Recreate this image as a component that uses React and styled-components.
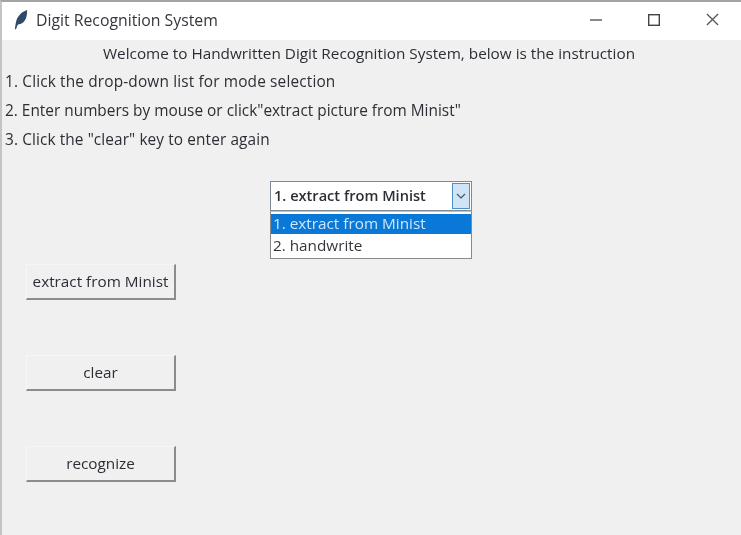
import React from 'react';
import styled, {createGlobalStyle} from 'styled-components';

const GlobalStyle = createGlobalStyle`
html, body {
  margin: 0;
  padding: 0;
  background: #f0f0f0;
}
* {
  box-sizing: border-box;
}
`

const Window = styled.div`
width: 741px;
height: 535px;
overflow: hidden;
display: flex;
flex-direction: column;
background: #f0f0f0;
border-top: solid 2px #a3a3a3;
border-left: solid 2px #c4c4c4;
font-family: "Open Sans", "Liberation Sans", sans-serif;
color: #2b2f35;
filter: blur(0.7px);
`

const TitleBar = styled.div`
height: 38px;
flex-shrink: 0;
display: flex;
flex-direction: row;
align-items: center;
background: #ffffff;
padding-left: 12px;
padding-bottom: 3px;
`

const Title = styled.div`
margin-left: 8px;
font-size: 15.8px;
color: #33373d;
flex: 1;
`

const WinButton = styled.div`
width: 58px;
display: flex;
align-items: center;
justify-content: center;
`

const Content = styled.div`
flex: 1;
display: flex;
flex-direction: column;
`

const Welcome = styled.div`
height: 27px;
line-height: 26px;
font-size: 15.3px;
padding-left: 101px;
white-space: nowrap;
`

const Line = styled.div`
height: 29px;
line-height: 29px;
font-size: 15.4px;
letter-spacing: ${({spacing}) => spacing || 0}px;
padding-left: 3px;
white-space: nowrap;
`

const ComboRow = styled.div`
margin-top: 27px;
padding-left: 268px;
`

const ComboWrap = styled.div`
position: relative;
width: 202px;
`

const Combo = styled.div`
height: 30px;
display: flex;
flex-direction: row;
align-items: center;
justify-content: space-between;
background: #ffffff;
border: solid 1px #7e8a96;
padding: 0 1px 0 3px;
font-size: 14.6px;
font-weight: 600;
white-space: nowrap;

span {
  margin-bottom: 2px;
}
`

const Arrow = styled.div`
width: 18px;
height: 26px;
display: flex;
align-items: center;
justify-content: center;
background: #cfe4f7;
border: solid 1px #4f8fc7;
`

const Menu = styled.div`
position: absolute;
top: 30px;
left: 0;
width: 202px;
height: 48px;
padding-top: 2px;
display: flex;
flex-direction: column;
gap: 2px;
background: #ffffff;
border: solid 1px #8a8a8a;
border-top: solid 1px #9ccaf0;
font-size: 15.3px;
white-space: nowrap;
`

const Option = styled.div`
height: 20px;
line-height: 18px;
padding-left: 2px;
background: ${({selected}) => selected ? '#0a78d7' : 'transparent'};
color: ${({selected}) => selected ? '#cfe6fa' : '#33373d'};
`

const Buttons = styled.div`
margin-top: 53px;
padding-left: 24px;
display: flex;
flex-direction: column;
gap: 55px;
`

const Button = styled.button`
width: 150px;
height: 36px;
padding: 0 0 2px;
background: #f0f0f0;
border: none;
border-top: solid 1px #f6f6f6;
border-left: solid 1px #f8f8f8;
border-right: solid 2px #8c8c8c;
border-bottom: solid 2px #8c8c8c;
font-family: inherit;
font-size: 15.3px;
color: #2b2f35;
white-space: nowrap;
`

const Feather = () => (
  <svg width="14" height="20" viewBox="0 0 14 20">
    <path d="M1 19 C1 17 1.5 15 2 12 C3 7 7 2 13 0 C13.5 5 12 12 6.5 14 L4 14.5 C3 16 2.5 18 2 19.5 Z" fill="#2f4a68" />
  </svg>
)

const App = () => {
  return (
    <Window>
      <GlobalStyle />
      <TitleBar>
        <Feather />
        <Title>Digit Recognition System</Title>
        <WinButton>
          <svg width="12" height="12" viewBox="0 0 12 12">
            <path d="M0 6 H12" stroke="#555" strokeWidth="1.4" />
          </svg>
        </WinButton>
        <WinButton>
          <svg width="12" height="12" viewBox="0 0 12 12">
            <rect x="0.7" y="0.7" width="10.6" height="10.6" fill="none" stroke="#444" strokeWidth="1.4" />
          </svg>
        </WinButton>
        <WinButton>
          <svg width="13" height="13" viewBox="0 0 14 14">
            <path d="M1 1 L13 13 M13 1 L1 13" stroke="#555" strokeWidth="1.4" />
          </svg>
        </WinButton>
      </TitleBar>
      <Content>
        <Welcome>Welcome to Handwritten Digit Recognition System, below is the instruction</Welcome>
        <Line spacing={0.15}>1. Click the drop-down list for mode selection</Line>
        <Line>2. Enter numbers by mouse or click"extract picture from Minist"</Line>
        <Line spacing={0.1}>3. Click the "clear" key to enter again</Line>
        <ComboRow>
          <ComboWrap>
            <Combo>
              <span>1. extract from Minist</span>
              <Arrow>
                <svg width="10" height="6" viewBox="0 0 10 6">
                  <path d="M1 1 L5 5 L9 1" fill="none" stroke="#4a5560" strokeWidth="1.2" />
                </svg>
              </Arrow>
            </Combo>
            <Menu>
              <Option selected>1. extract from Minist</Option>
              <Option>2. handwrite</Option>
            </Menu>
          </ComboWrap>
        </ComboRow>
        <Buttons>
          <Button>extract from Minist</Button>
          <Button>clear</Button>
          <Button>recognize</Button>
        </Buttons>
      </Content>
    </Window>
  )
}

export default App;
